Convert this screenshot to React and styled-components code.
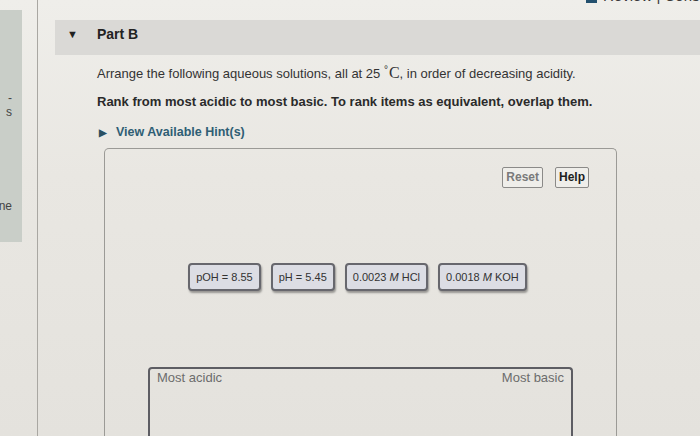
import React from 'react'
import styled, { createGlobalStyle } from 'styled-components'

const GlobalStyle = createGlobalStyle`
  html, body {
    margin: 0;
    padding: 0;
    background: #e8e6e1;
  }
  body {
    font-family: 'Liberation Sans', Arial, sans-serif;
    color: #2a2a2a;
  }
`

const chips = [
  { id: 'poh', label: 'pOH = 8.55' },
  { id: 'ph', label: 'pH = 5.45' },
  { id: 'hcl', label: '0.0023 ', unit: 'M', rest: ' HCl' },
  { id: 'koh', label: '0.0018 ', unit: 'M', rest: ' KOH' },
]

function App() {
  return (
    <>
      <GlobalStyle />
      <Page>
        <SideRail>
          <SidePanel>
            <SideText $top={82}>-</SideText>
            <SideText $top={2}>s</SideText>
            <SideText $top={82}>ne</SideText>
          </SidePanel>
        </SideRail>
        <Main>
          <TopStrip>
            <TopLink>
              <LinkIcon />
              Review | Constants
            </TopLink>
          </TopStrip>
          <HeaderBand>
            <Caret>&#9660;</Caret>
            <PartTitle>Part B</PartTitle>
          </HeaderBand>
          <Content>
            <Prompt>
              Arrange the following aqueous solutions, all at 25 <Deg>°</Deg>
              <SerifC>C</SerifC>, in order of decreasing acidity.
            </Prompt>
            <Instruction>
              Rank from most acidic to most basic. To rank items as equivalent,
              overlap them.
            </Instruction>
            <HintLink>
              <HintArrow>&#9654;</HintArrow>
              View Available Hint(s)
            </HintLink>
          </Content>
          <Workspace>
            <Toolbar>
              <ToolButton $muted>Reset</ToolButton>
              <ToolButton>Help</ToolButton>
            </Toolbar>
            <ChipRow>
              {chips.map((c) => (
                <Chip key={c.id}>
                  {c.label}
                  {c.unit && <Italic>{c.unit}</Italic>}
                  {c.rest}
                </Chip>
              ))}
            </ChipRow>
            <RankBox>
              <RankLabel>Most acidic</RankLabel>
              <RankLabel>Most basic</RankLabel>
            </RankBox>
          </Workspace>
        </Main>
      </Page>
    </>
  )
}

export default App

const Page = styled.div`
  display: flex;
  width: 700px;
  height: 436px;
  overflow: hidden;
  background: linear-gradient(180deg, #efeeea 0%, #e9e7e2 40%, #e4e2dd 100%);
`
const SideRail = styled.div`
  width: 38px;
  flex-shrink: 0;
  padding-top: 10px;
  border-right: 1px solid #a9a7a2;
  box-sizing: border-box;
`
const SidePanel = styled.div`
  width: 22px;
  height: 232px;
  background: #c9cec8;
  overflow: hidden;
  display: flex;
  flex-direction: column;
  align-items: flex-end;
`
const SideText = styled.div`
  margin-top: ${(p) => p.$top}px;
  font-size: 12px;
  line-height: 12px;
  color: #444;
  padding-right: 10px;
`
const Main = styled.div`
  flex: 1;
  padding-left: 17px;
  display: flex;
  flex-direction: column;
`
const TopStrip = styled.div`
  height: 20px;
  display: flex;
  justify-content: flex-end;
  align-items: flex-start;
  overflow: hidden;
`
const TopLink = styled.div`
  display: flex;
  align-items: flex-end;
  gap: 6px;
  margin-top: -11px;
  margin-right: -32px;
  font-size: 15px;
  line-height: 14px;
  color: #3a3a3a;
`
const LinkIcon = styled.span`
  width: 11px;
  height: 13px;
  background: #23506e;
  display: inline-block;
`
const HeaderBand = styled.div`
  height: 35px;
  background: #dad9d6;
  display: flex;
  align-items: center;
  padding-left: 12px;
  flex-shrink: 0;
`
const Caret = styled.span`
  font-size: 11px;
  color: #222;
  width: 30px;
  margin-top: -8px;
`
const PartTitle = styled.span`
  font-weight: bold;
  font-size: 14px;
  color: #222;
  margin-top: -8px;
`
const Content = styled.div`
  padding-left: 42px;
  display: flex;
  flex-direction: column;
`
const Prompt = styled.div`
  margin-top: 7px;
  font-size: 13px;
  line-height: 16px;
  color: #333;
`
const Deg = styled.span`
  font-size: 10px;
  vertical-align: 5px;
  margin-right: 1px;
`
const SerifC = styled.span`
  font-family: 'Liberation Serif', 'Times New Roman', serif;
  font-size: 16px;
`
const Instruction = styled.div`
  margin-top: 12px;
  font-size: 13px;
  font-weight: bold;
  color: #2a2a2a;
`
const HintLink = styled.div`
  margin-top: 16px;
  font-size: 12.5px;
  font-weight: bold;
  color: #2f5e74;
  display: flex;
  align-items: center;
`
const HintArrow = styled.span`
  font-size: 10px;
  margin-left: 2px;
  width: 17px;
  color: #2a4f62;
`
const Workspace = styled.div`
  margin-top: 9px;
  margin-left: 49px;
  width: 513px;
  flex: 1;
  border: 1px solid #9b9a96;
  border-bottom: none;
  border-radius: 5px 5px 0 0;
  display: flex;
  flex-direction: column;
  align-items: center;
  box-sizing: border-box;
`
const Toolbar = styled.div`
  align-self: stretch;
  display: flex;
  justify-content: flex-end;
  gap: 12px;
  padding: 18px 27px 0 0;
`
const ToolButton = styled.div`
  height: 19px;
  padding: 0 3px;
  border: 1px solid #8b8a88;
  border-radius: 2px;
  background: #efeeea;
  font-size: 12px;
  font-weight: bold;
  line-height: 19px;
  color: ${(p) => (p.$muted ? '#7a7a7a' : '#1e1e1e')};
`
const ChipRow = styled.div`
  display: flex;
  gap: 10px;
  margin-top: 75px;
  margin-right: 6px;
`
const Chip = styled.div`
  height: 24px;
  padding: 0 6px;
  border: 2px solid #67676d;
  border-radius: 4px;
  background: #dcdde4;
  box-shadow: 1px 2px 2px rgba(0, 0, 0, 0.35);
  font-size: 11px;
  line-height: 24px;
  color: #333;
  white-space: pre;
`
const Italic = styled.i`
  font-style: italic;
`
const RankBox = styled.div`
  margin-top: 76px;
  width: 425px;
  flex: 1;
  border: 2px solid #5d5d63;
  border-bottom: none;
  border-radius: 4px 4px 0 0;
  display: flex;
  justify-content: space-between;
  padding: 1px 7px 0;
  box-sizing: border-box;
`
const RankLabel = styled.span`
  font-size: 13px;
  color: #6c6c6c;
`
